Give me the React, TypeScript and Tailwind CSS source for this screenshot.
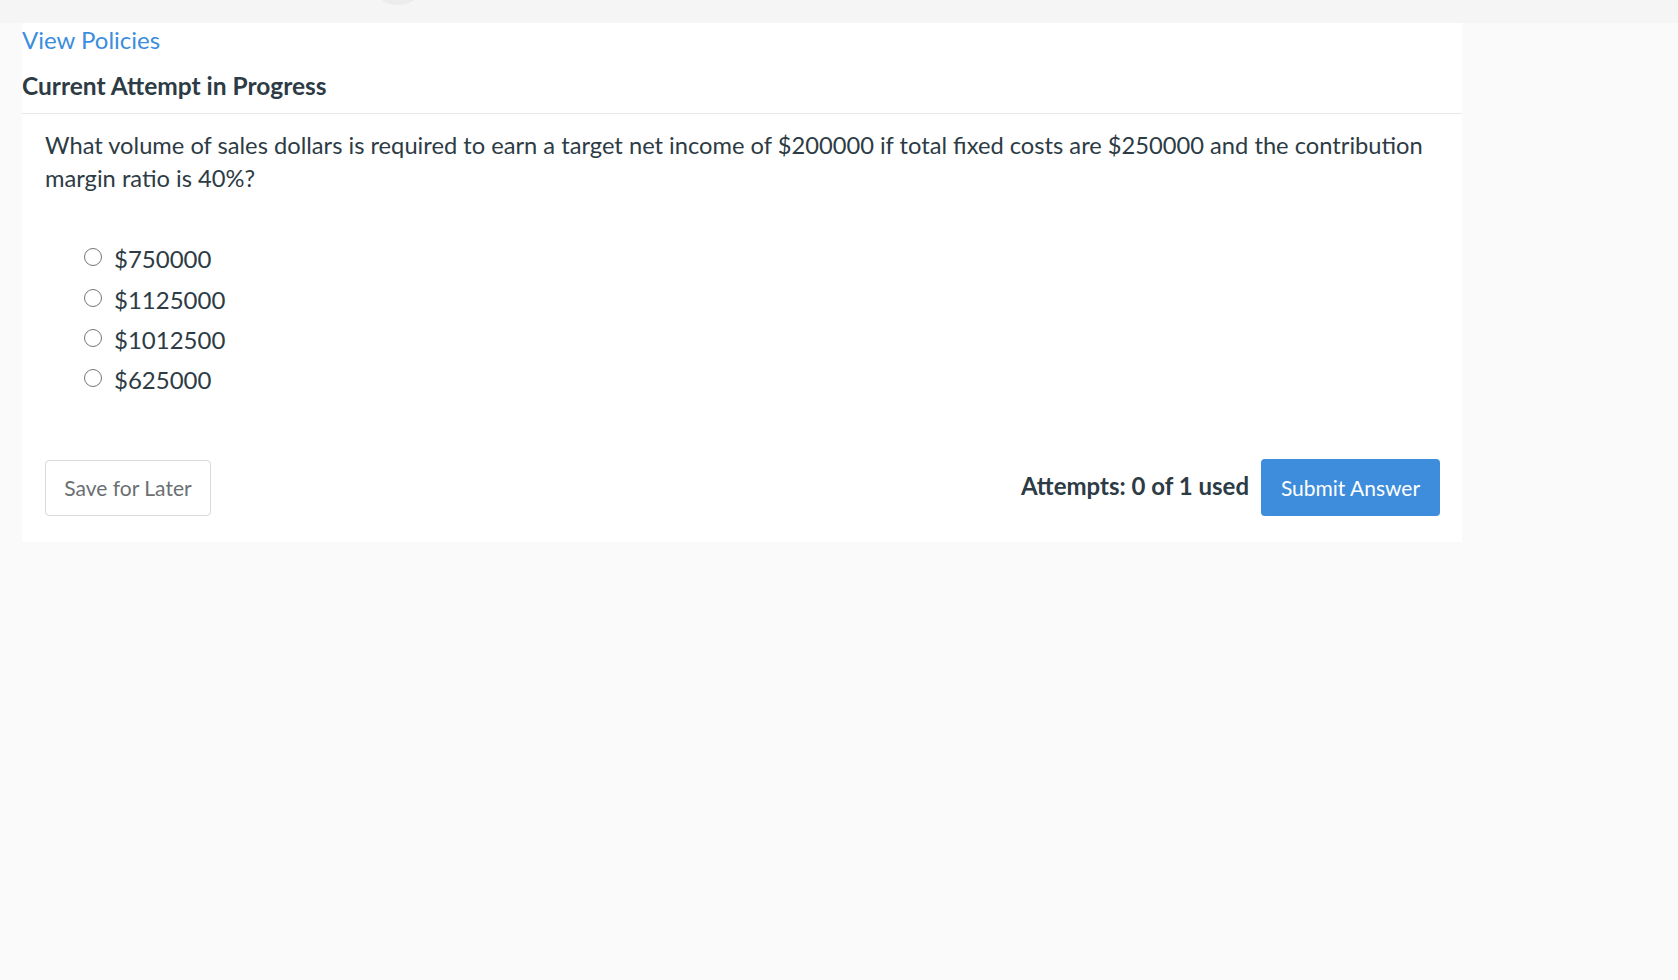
import React from 'react';

const options = ['$750000', '$1125000', '$1012500', '$625000'];

export default function App() {
  return (
    <div
      className="min-h-[980px] bg-[#fafafa] text-[#2d3b45]"
      style={{ fontFamily: 'Lato, "Open Sans", sans-serif' }}
    >
      {/* top strip */}
      <div className="relative h-[23px] overflow-hidden bg-[#f5f5f5]">
        <div className="absolute left-[368px] top-[-55px] h-[60px] w-[60px] rounded-full bg-[#ececec]" />
      </div>

      <div className="ml-[22px] w-[1440px] bg-white">
        <div className="border-b border-[#e8e8e8] pb-[13px] pt-[3px]">
          <a href="#" className="block text-[24px] leading-[1.2] text-[#3b8ddd]">
            View Policies
          </a>
          <h2 className="mt-[16px] text-[24.5px] font-bold leading-[1.2] text-[#2d3b45]">
            Current Attempt in Progress
          </h2>
        </div>

        <div className="pb-[26px] pl-[23px] pr-[8px] pt-[15px]">
          <p className="text-[23.7px] leading-[33px]">
            What volume of sales dollars is required to earn a target net income of $200000 if total fixed costs are $250000 and the contribution margin ratio is 40%?
          </p>

          <div className="mt-[43px] pl-[39px]">
            {options.map((opt) => (
              <label key={opt} className="flex h-[40.3px] items-center gap-[12px] text-[24px]">
                <span className="h-[18px] w-[18px] shrink-0 -translate-y-[1px] rounded-full border border-[#767676] bg-white" />
                <span className="translate-y-[1px]">{opt}</span>
              </label>
            ))}
          </div>

          <div className="mt-[60px] flex items-center justify-between pr-[14px]">
            <button className="h-[56px] w-[166px] rounded-[4px] border border-[#d9d9d9] bg-white text-[21px] text-[#6b6f73]">
              Save for Later
            </button>
            <div className="flex items-center gap-[12px]">
              <span className="-translate-y-[2px] text-[24px] font-bold">Attempts: 0 of 1 used</span>
              <button className="h-[57px] w-[179px] rounded-[4px] bg-[#3d8ddc] text-[21px] text-white">
                Submit Answer
              </button>
            </div>
          </div>
        </div>
      </div>
    </div>
  );
}
